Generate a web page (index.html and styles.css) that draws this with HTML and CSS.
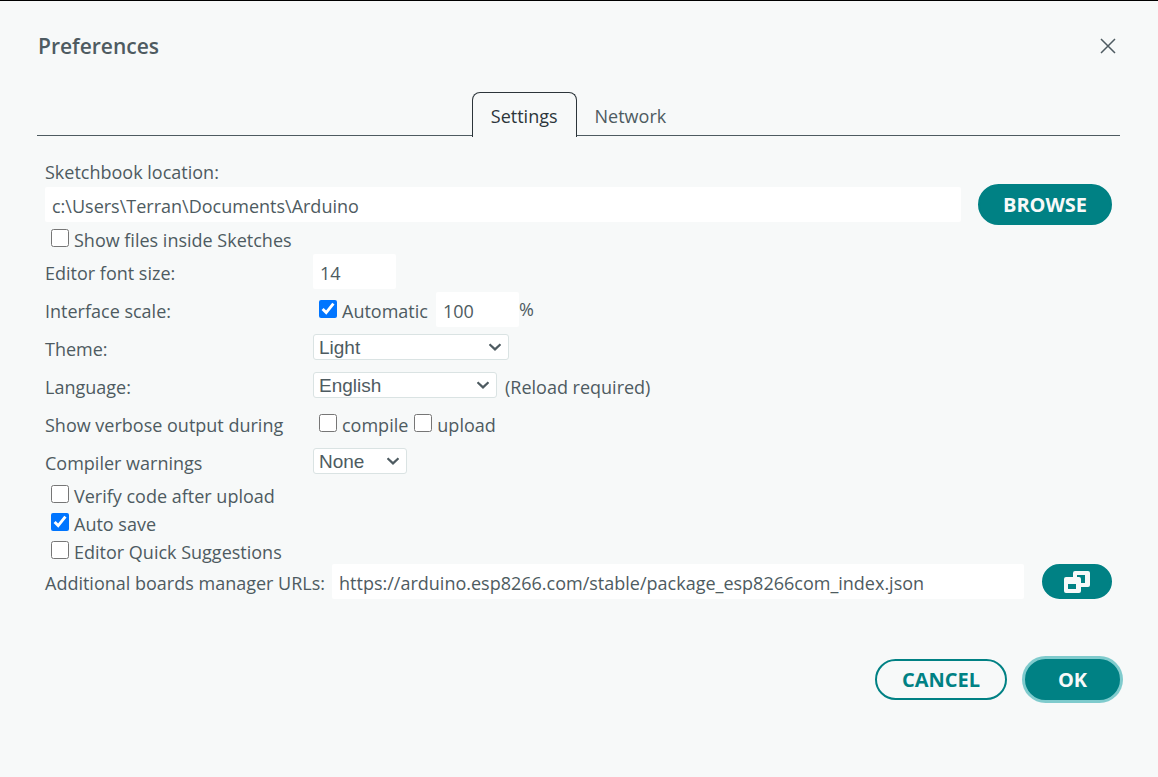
FILE: index.html
```html
<!DOCTYPE html>
<html lang="en">
<head>
  <meta charset="UTF-8">
  <title>Preferences</title>
  <link rel="stylesheet" href="styles.css">
</head>
<body>
  <form class="dialog">
    <header class="dialog-header">
      <h1>Preferences</h1>
      <button type="button" class="close" aria-label="Close">
        <svg width="16" height="16" viewBox="0 0 16 16"><path d="M1 1L15 15M15 1L1 15" stroke="currentColor" stroke-width="1.5" fill="none"/></svg>
      </button>
    </header>

    <div class="tabs" role="tablist">
      <button type="button" class="tab active" role="tab" aria-selected="true">Settings</button>
      <button type="button" class="tab" role="tab" aria-selected="false">Network</button>
    </div>

    <div class="settings">
      <label class="block-label" for="sketchbook">Sketchbook location:</label>
      <div class="path-row">
        <input type="text" class="field grow" id="sketchbook" value="c:\Users\Terran\Documents\Arduino">
        <button type="button" class="btn primary browse">BROWSE</button>
      </div>
      <label class="check"><input type="checkbox"><span>Show files inside Sketches</span></label>

      <div class="row">
        <label class="name" for="fontSize">Editor font size:</label>
        <input type="text" class="field small" id="fontSize" value="14">
      </div>
      <div class="row">
        <label class="name" for="scale">Interface scale:</label>
        <label class="check auto"><input type="checkbox" checked><span>Automatic</span></label>
        <input type="text" class="field small" id="scale" value="100">
        <span>%</span>
      </div>
      <div class="row">
        <label class="name" for="theme">Theme:</label>
        <select id="theme" class="theme"><option>Light</option><option>Dark</option></select>
      </div>
      <div class="row">
        <label class="name" for="language">Language:</label>
        <select id="language" class="language"><option>English</option></select>
        <span class="hint">(Reload required)</span>
      </div>
      <div class="row">
        <span class="name">Show verbose output during</span>
        <label class="check"><input type="checkbox"><span>compile</span></label>
        <label class="check"><input type="checkbox"><span>upload</span></label>
      </div>
      <div class="row">
        <label class="name" for="warnings">Compiler warnings</label>
        <select id="warnings" class="warnings"><option>None</option><option>All</option></select>
      </div>

      <label class="check"><input type="checkbox"><span>Verify code after upload</span></label>
      <label class="check"><input type="checkbox" checked><span>Auto save</span></label>
      <label class="check"><input type="checkbox"><span>Editor Quick Suggestions</span></label>

      <div class="urls-row">
        <label for="urls">Additional boards manager URLs:</label>
        <input type="text" class="field grow" id="urls" value="https://arduino.esp8266.com/stable/package_esp8266com_index.json">
        <button type="button" class="btn primary expand" aria-label="Edit URLs">
          <svg width="26" height="22" viewBox="0 0 26 22">
            <path fill="currentColor" d="M11 0H24Q26 0 26 2V14Q26 16 24 16H17V12H21V4H13V6H9V2Q9 0 11 0Z"/>
            <path fill="currentColor" fill-rule="evenodd" d="M2 6H15Q17 6 17 8V20Q17 22 15 22H2Q0 22 0 20V8Q0 6 2 6ZM4 13V18H12V13Z"/>
          </svg>
        </button>
      </div>
    </div>

    <footer class="actions">
      <button type="button" class="btn secondary">CANCEL</button>
      <button type="submit" class="btn primary ok">OK</button>
    </footer>
  </form>
</body>
</html>
```
FILE: styles.css
```css
* { box-sizing: border-box; }
body {
  margin: 0;
  min-height: 100vh;
  background: #f7f9f9;
  border-top: 1px solid #000;
  color: #4e5b61;
  font: 18px/24px "Open Sans", "Noto Sans", sans-serif;
}
button, input { font: inherit; color: inherit; }
.dialog { padding: 29px 38px 0 37px; }

.dialog-header { display: flex; justify-content: space-between; align-items: center; height: 32px; }
.dialog-header h1 { margin: 0 0 0 1px; font-size: 21px; font-weight: 600; }
.close { display: flex; padding: 4px; background: none; border: none; cursor: pointer; }

.tabs {
  display: flex;
  justify-content: center;
  margin-top: 30px;
  height: 44px;
  border-bottom: 1px solid #4e5b61;
}
.tab {
  height: 45px;
  padding: 2px 18px 0;
  background: #f7f9f9;
  border: 1px solid transparent;
  border-bottom: none;
  cursor: pointer;
}
.tab.active { color: #2c353a; border-color: #2c353a; border-radius: 8px 8px 0 0; }
.tab:not(.active) { height: 43px; padding-top: 4px; padding-left: 17px; }

.settings { display: flex; flex-direction: column; padding: 24px 8px 0; }
.block-label { align-self: flex-start; }
.path-row { display: flex; align-items: center; gap: 17px; margin-bottom: -1px; }
.field {
  height: 35px;
  min-width: 0;
  padding: 3px 7px 0;
  background: #fff;
  border: none;
  border-radius: 2px;
}
.grow { flex: 1; }
.small { width: 83px; }

.row { display: flex; align-items: center; height: 38px; }
.name { width: 268px; padding-top: 4px; }
.check { display: flex; align-items: center; height: 28px; padding-left: 6px; }
.check input { width: 18px; height: 18px; margin: 0 5px 0 0; }
.check span, .hint { padding-top: 4px; }
.auto { margin-right: 8px; }
.hint { margin-left: 8px; }

select {
  appearance: none;
  height: 26px;
  padding: 0 5px;
  background: #fff url("data:image/svg+xml,%3Csvg xmlns='http://www.w3.org/2000/svg' width='14' height='8'%3E%3Cpath d='M1.5 1.2L7 6.4L12.5 1.2' fill='none' stroke='%234e5b61' stroke-width='2.2'/%3E%3C/svg%3E") no-repeat right 6px center;
  border: 1px solid #dae3e3;
  border-radius: 3px;
  color: inherit;
  font: 19px "Liberation Sans", Arial, sans-serif;
}
.theme { width: 196px; }
.language { width: 184px; }
.warnings { width: 94px; }

.urls-row { display: flex; align-items: center; }
.urls-row label { padding-top: 2px; margin-right: 7px; }

.btn {
  height: 41px;
  padding: 0;
  border: 2px solid #008184;
  border-radius: 21px;
  font-size: 20px;
  font-weight: 700;
  cursor: pointer;
}
.primary { background: #008184; color: #f7f9f9; }
.secondary { width: 132px; background: none; color: #008184; }
.browse { width: 134px; }
.ok { width: 95px; box-shadow: 0 0 0 3px #7fcbcd; }
.expand { display: flex; align-items: center; justify-content: center; width: 70px; height: 35px; margin-left: 18px; }

.actions { display: flex; justify-content: flex-end; gap: 18px; margin-top: 60px; }
```
